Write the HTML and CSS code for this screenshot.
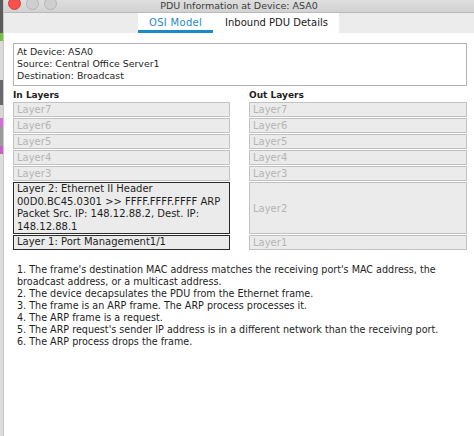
FILE: index.html
```html
<!DOCTYPE html>
<html>
<head>
<meta charset="utf-8">
<link rel="stylesheet" href="styles.css">
</head>
<body>
<div class="desktop">
  <div class="strip">
    <div class="seg seg-dark"></div>
    <div class="seg seg-green"></div>
    <div class="seg seg-grey1"></div>
    <div class="seg seg-dark2"></div>
    <div class="seg seg-grey2"></div>
    <div class="seg seg-pink"></div>
    <div class="seg seg-grey3"></div>
    <div class="seg seg-pink2"></div>
    <div class="seg seg-grey4"></div>
  </div>
  <div class="window">
    <div class="titlebar">
      <div class="lights">
        <span class="light red"></span>
        <span class="light grey"></span>
        <span class="light grey"></span>
      </div>
      <div class="title">PDU Information at Device: ASA0</div>
    </div>
    <div class="tabbar">
      <div class="tabs">
        <div class="tab active">OSI Model</div>
        <div class="tab">Inbound PDU Details</div>
      </div>
    </div>
    <div class="content">
      <div class="info">
        <div>At Device: ASA0</div>
        <div>Source: Central Office Server1</div>
        <div>Destination: Broadcast</div>
      </div>
      <div class="layers">
        <div class="hdr">In Layers</div>
        <div class="hdr">Out Layers</div>
        <div class="box">Layer7</div>
        <div class="box">Layer7</div>
        <div class="box">Layer6</div>
        <div class="box">Layer6</div>
        <div class="box">Layer5</div>
        <div class="box">Layer5</div>
        <div class="box">Layer4</div>
        <div class="box">Layer4</div>
        <div class="box">Layer3</div>
        <div class="box">Layer3</div>
        <div class="box active">Layer 2: Ethernet II Header<br>00D0.BC45.0301 &gt;&gt; FFFF.FFFF.FFFF ARP<br>Packet Src. IP: 148.12.88.2, Dest. IP:<br>148.12.88.1</div>
        <div class="box center">Layer2</div>
        <div class="box active">Layer 1: Port Management1/1</div>
        <div class="box">Layer1</div>
      </div>
      <div class="steps">
        <div>1. The frame's destination MAC address matches the receiving port's MAC address, the broadcast address, or a multicast address.</div>
        <div>2. The device decapsulates the PDU from the Ethernet frame.</div>
        <div>3. The frame is an ARP frame. The ARP process processes it.</div>
        <div>4. The ARP frame is a request.</div>
        <div>5. The ARP request's sender IP address is in a different network than the receiving port.</div>
        <div>6. The ARP process drops the frame.</div>
      </div>
    </div>
  </div>
</div>
</body>
</html>
```

FILE: styles.css
```css
html, body {
  margin: 0;
  padding: 0;
  background: #ffffff;
}
body {
  font-family: "DejaVu Sans", Verdana, sans-serif;
  color: #1e1e1e;
  width: 474px;
  height: 436px;
  overflow: hidden;
}
.desktop {
  display: flex;
  height: 436px;
}
.strip {
  width: 3px;
  display: flex;
  flex-direction: column;
  flex: none;
}
.seg { flex: none; }
.seg-dark { height: 33px; background: #5b5b5b; }
.seg-green { height: 8px; background: #74c045; }
.seg-grey1 { height: 39px; background: #dadada; }
.seg-dark2 { height: 25px; background: #6a6a6a; }
.seg-grey2 { height: 13px; background: #d6d6d6; }
.seg-pink { height: 9px; background: #d46ed6; }
.seg-grey3 { height: 19px; background: #9a9a9a; }
.seg-pink2 { height: 8px; background: #c85ccc; }
.seg-grey4 { flex: 1; background: #dddddd; }

.window {
  flex: 1;
  display: flex;
  flex-direction: column;
  background: #ffffff;
  border-left: 1px solid #c8c8c8;
}
.titlebar {
  height: 12px;
  background: linear-gradient(#dedede, #d2d2d2);
  border-bottom: 1px solid #b9b9b9;
  display: flex;
  position: relative;
  overflow: hidden;
}
.lights {
  display: flex;
  gap: 5px;
  margin-left: 4px;
  margin-top: -3px;
}
.light {
  width: 11px;
  height: 11px;
  border-radius: 50%;
  background: #cfcfcf;
  border: 0.5px solid #b5b5b5;
}
.light.red {
  background: #f4514f;
  border-color: #d7403c;
}
.title {
  position: absolute;
  left: 0;
  right: 0;
  top: 0;
  text-align: center;
  font-size: 9.5px;
  line-height: 12px;
  color: #3c3c3c;
}
.tabbar {
  height: 20px;
  background: #ececec;
  display: flex;
  padding-left: 134px;
}
.tabs {
  display: flex;
  background: #ffffff;
}
.tab {
  font-size: 10px;
  line-height: 20px;
  padding: 0 11px 0 12px;
  color: #1a1a1a;
  height: 20px;
  box-sizing: border-box;
}
.tab.active {
  color: #1d8bcb;
  padding: 0 11px 0 11px;
  border-bottom: 3px solid #1a8ac9;
  letter-spacing: 0.3px;
}
.content {
  padding: 10px 7px 0 9px;
  font-size: 10px;
}
.info {
  border: 1px solid #b3b3b3;
  padding: 2px 3px 3px 3px;
  line-height: 12px;
  font-size: 9.4px;
}
.layers {
  margin-top: 4px;
  display: grid;
  grid-template-columns: 217px 218px;
  column-gap: 19px;
  row-gap: 1px;
}
.hdr {
  font-weight: bold;
  font-size: 9px;
  line-height: 11px;
}
.box {
  background: #ebebeb;
  border: 1px solid #c2c2c2;
  color: #b4b4b4;
  line-height: 13px;
  padding: 0 3px;
}
.box.active {
  border-color: #2a2a2a;
  color: #1e1e1e;
  line-height: 12.5px;
}
.box.center {
  display: flex;
  align-items: center;
}
.steps {
  margin-top: 14px;
  padding-left: 4px;
  line-height: 12px;
  font-size: 9.6px;
}
```
